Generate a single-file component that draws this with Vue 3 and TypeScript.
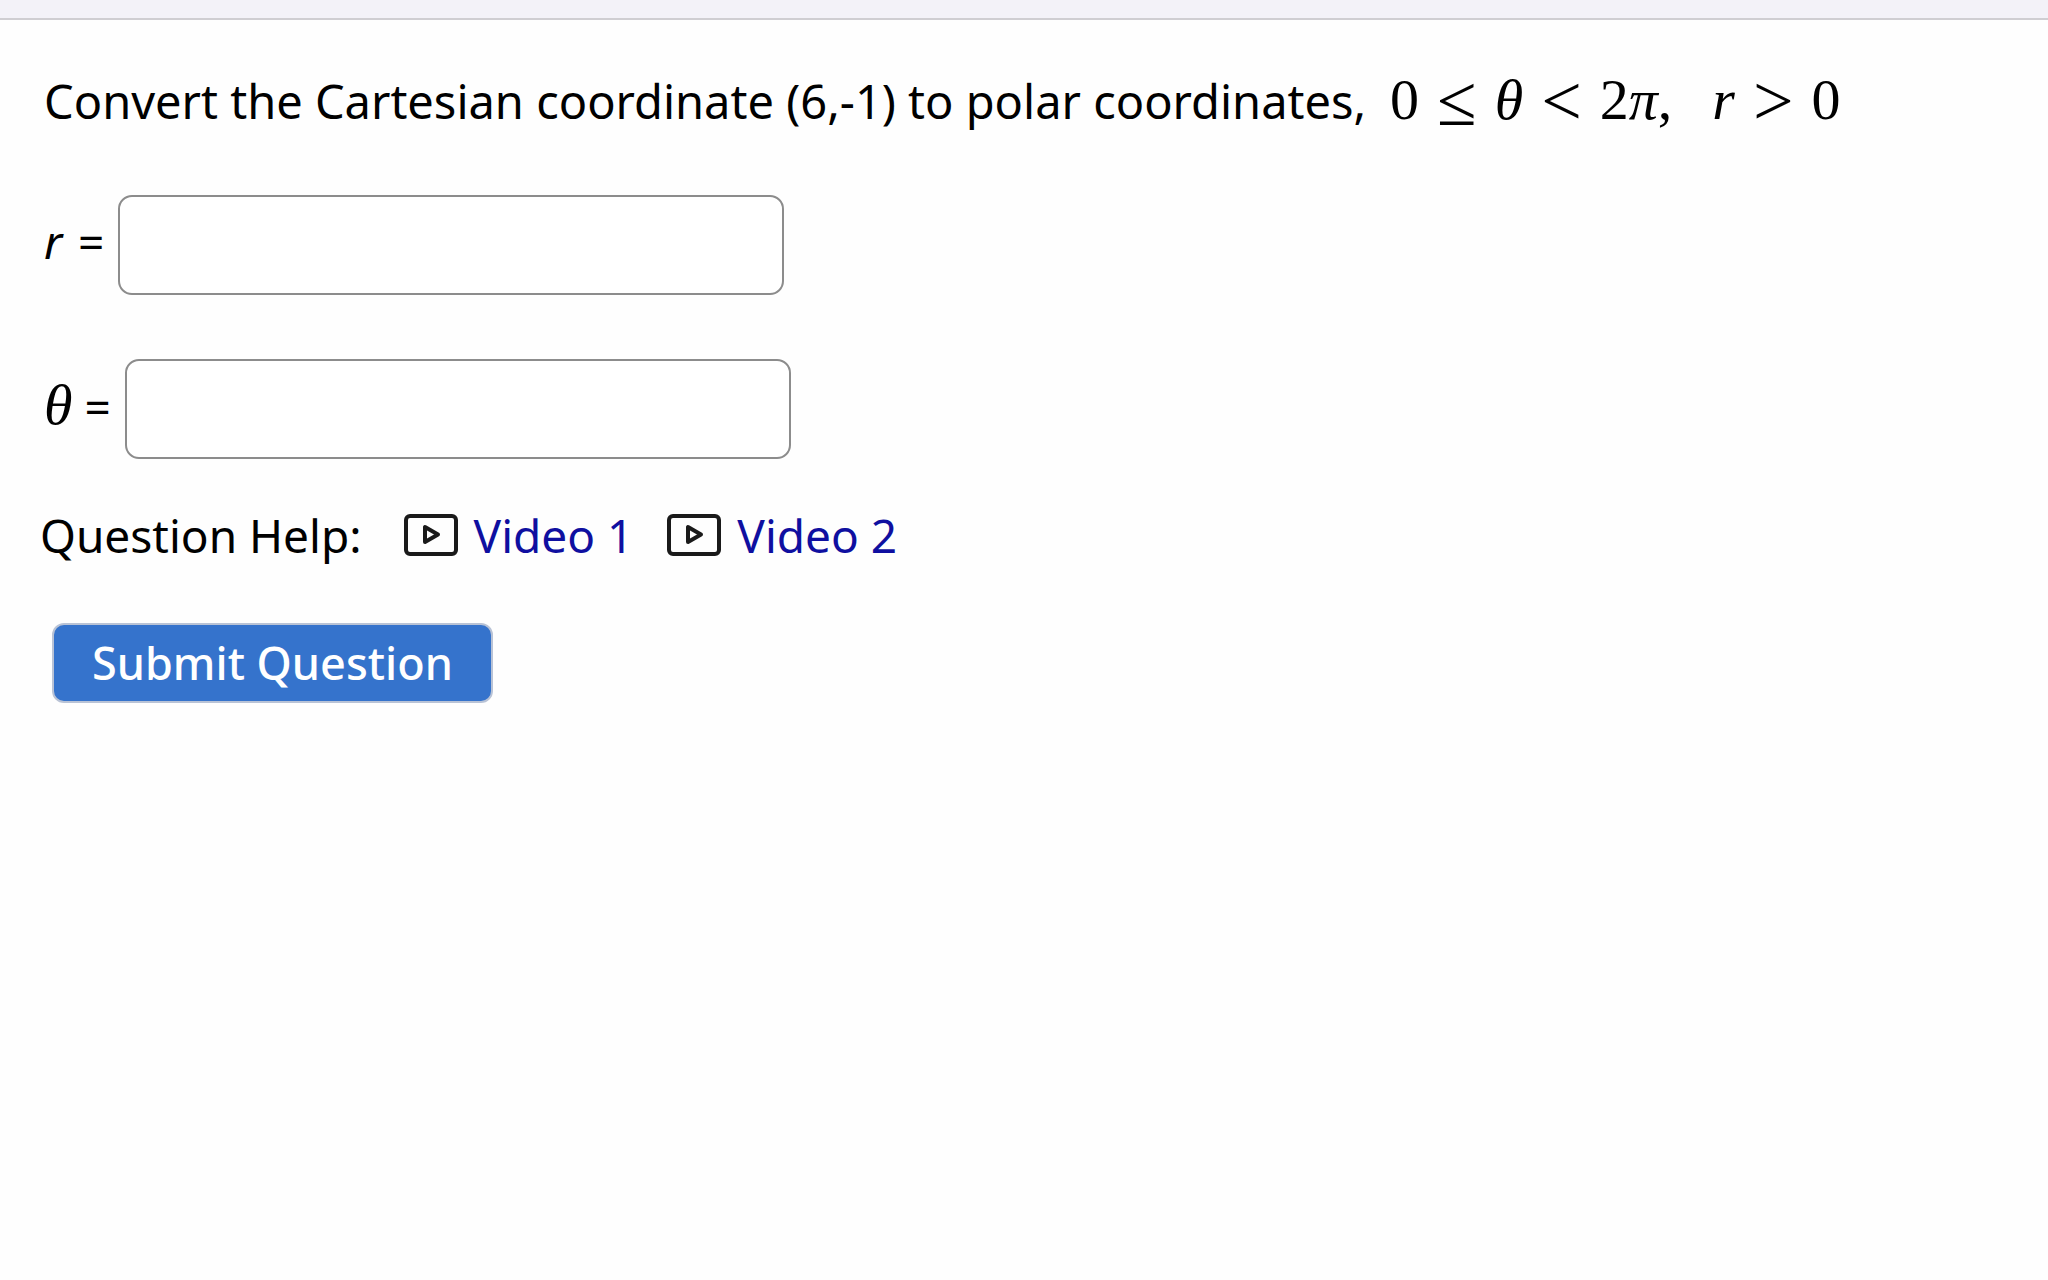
<script setup lang="ts">
import { ref } from 'vue'

const radius = ref('')
const angle = ref('')
const videos = ['Video 1', 'Video 2']
</script>

<template>
  <div class="page">
    <header class="strip"></header>
    <form class="question" @submit.prevent>
      <p class="prompt">
        <span>Convert the Cartesian coordinate (6,-1) to polar coordinates,</span>
        <span class="math">
          <span>0</span>
          <span class="rel">≤</span>
          <i>θ</i>
          <span class="rel">&lt;</span>
          <span>2<i>π</i>,</span>
          <i class="next">r</i>
          <span class="rel">&gt;</span>
          <span>0</span>
        </span>
      </p>
      <div class="answer">
        <label for="radius"><i>r</i><span>=</span></label>
        <input id="radius" v-model="radius" type="text" autocomplete="off" />
      </div>
      <div class="answer">
        <label for="angle"><i class="theta">θ</i><span>=</span></label>
        <input id="angle" v-model="angle" type="text" autocomplete="off" />
      </div>
      <div class="help">
        <span class="help-title">Question Help:</span>
        <a v-for="video in videos" :key="video" href="#">
          <svg width="54" height="42" viewBox="0 0 54 42" fill="none" stroke="#1a1a1a" aria-hidden="true">
            <rect x="2" y="2" width="50" height="38" rx="4" stroke-width="4" />
            <path d="M21 13v15l13-7.500z" stroke-width="4" stroke-linejoin="round" />
          </svg>
          <span>{{ video }}</span>
        </a>
      </div>
      <button type="submit">Submit Question</button>
    </form>
  </div>
</template>

<style>
body {
  margin: 0;
  background: #fefefe;
}
</style>

<style scoped>
.page {
  color: #000;
  font-family: "Noto Sans", "Open Sans", sans-serif;
  font-size: 46px;
  font-weight: 440;
  line-height: 60px;
}

.strip {
  height: 18px;
  background: #f3f2f8;
  border-bottom: 2px solid #cfced2;
}

.question {
  padding: 51px 40px;
}

.prompt {
  display: flex;
  align-items: baseline;
  gap: 24px;
  margin: 0 0 64px;
  padding-left: 4px;
  font-size: 47px;
  white-space: nowrap;
}

.math {
  font-family: "Liberation Serif", serif;
  font-size: 58px;
  font-weight: 400;
  line-height: 40px;
}

.rel {
  margin: 0 18px;
  font-size: 72px;
  line-height: 20px;
  vertical-align: -6px;
}

.next {
  margin-left: 40px;
}

.answer {
  display: flex;
  align-items: center;
  gap: 14px;
  margin-bottom: 64px;
  padding-left: 4px;
}

.answer + .help {
  margin-top: -18px;
}

label {
  display: flex;
  align-items: baseline;
  gap: 12px;
  padding-bottom: 8px;
}

label i {
  min-width: 22px;
}

.theta {
  font-family: "Liberation Serif", serif;
  font-size: 58px;
  font-weight: 400;
}

input {
  box-sizing: border-box;
  width: 666px;
  height: 100px;
  padding: 0 16px;
  border: 2px solid #8c8c8c;
  border-radius: 14px;
  background: #fff;
  font: inherit;
}

.help {
  display: flex;
  align-items: center;
  gap: 34px;
}

.help-title {
  margin-right: 8px;
}

a {
  display: flex;
  align-items: center;
  gap: 16px;
  color: #0f0fa0;
  text-decoration: none;
}

button {
  height: 80px;
  margin: 58px 0 0 12px;
  padding: 0 38px;
  border: 2px solid #b9c3d6;
  border-radius: 12px;
  background: #3573cc;
  color: #fff;
  font: inherit;
  font-size: 45px;
  font-weight: 500;
}
</style>
